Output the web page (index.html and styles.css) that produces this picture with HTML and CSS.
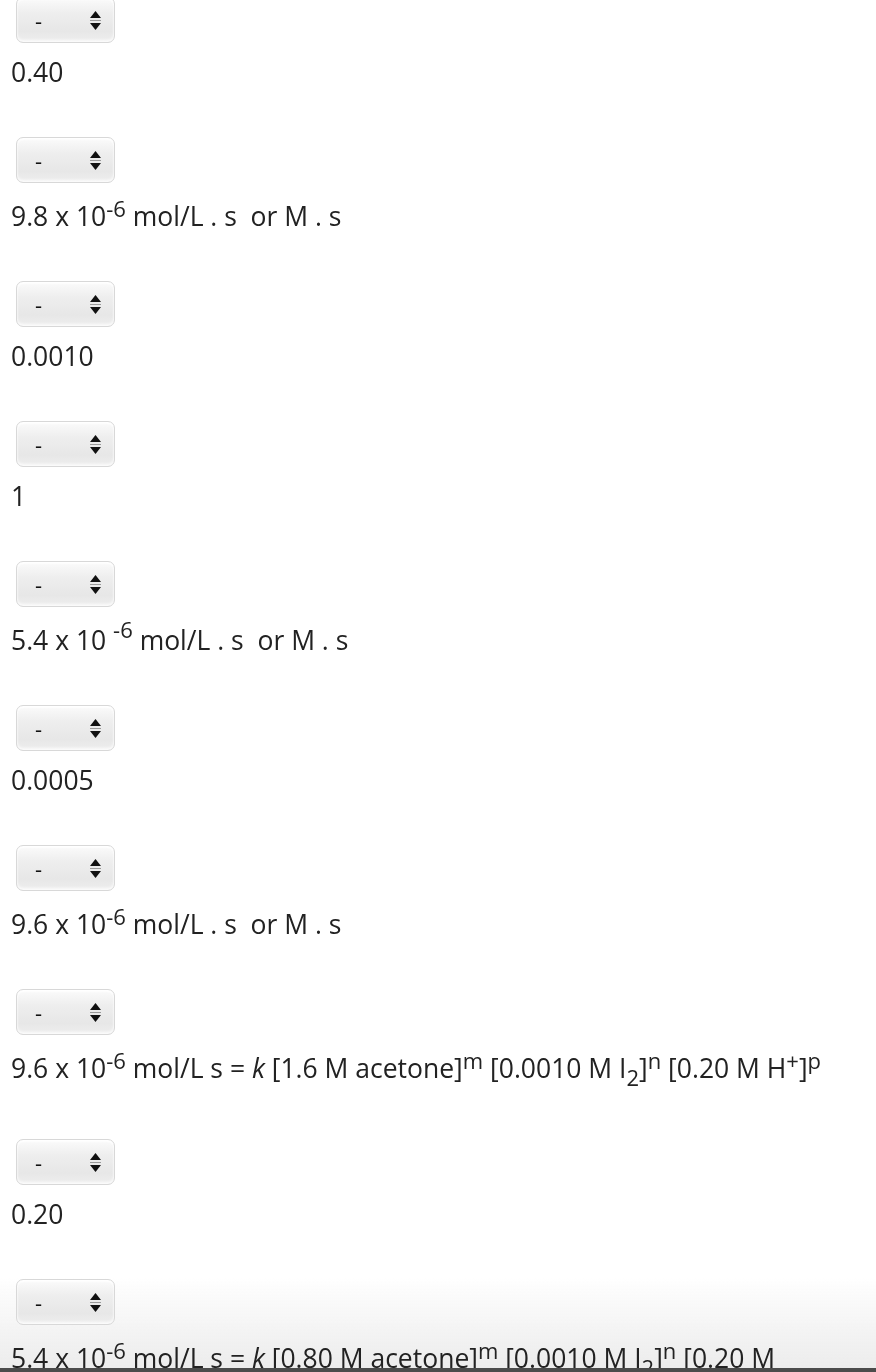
FILE: index.html
```html
<!DOCTYPE html>
<html lang="en">
<head>
<meta charset="utf-8">
<title>Rate law answers</title>
<link rel="stylesheet" href="styles.css">
</head>
<body>
<main class="sheet">
  <div class="q">
    <span class="pick"><select><option>-</option></select><svg class="arrows" viewBox="0 0 11 20" width="11" height="20"><path d="M0 7 L5.5 0 L11 7 Z"/><path class="sep" d="M0 9.5 H11"/><path d="M0 12 L11 12 L5.5 19 Z"/></svg></span>
    <p class="ans">0.40</p>
  </div>
  <div class="q">
    <span class="pick"><select><option>-</option></select><svg class="arrows" viewBox="0 0 11 20" width="11" height="20"><path d="M0 7 L5.5 0 L11 7 Z"/><path class="sep" d="M0 9.5 H11"/><path d="M0 12 L11 12 L5.5 19 Z"/></svg></span>
    <p class="ans">9.8 x 10<sup>-6</sup> mol/L . s&nbsp; or M . s</p>
  </div>
  <div class="q">
    <span class="pick"><select><option>-</option></select><svg class="arrows" viewBox="0 0 11 20" width="11" height="20"><path d="M0 7 L5.5 0 L11 7 Z"/><path class="sep" d="M0 9.5 H11"/><path d="M0 12 L11 12 L5.5 19 Z"/></svg></span>
    <p class="ans">0.0010</p>
  </div>
  <div class="q">
    <span class="pick"><select><option>-</option></select><svg class="arrows" viewBox="0 0 11 20" width="11" height="20"><path d="M0 7 L5.5 0 L11 7 Z"/><path class="sep" d="M0 9.5 H11"/><path d="M0 12 L11 12 L5.5 19 Z"/></svg></span>
    <p class="ans">1</p>
  </div>
  <div class="q">
    <span class="pick"><select><option>-</option></select><svg class="arrows" viewBox="0 0 11 20" width="11" height="20"><path d="M0 7 L5.5 0 L11 7 Z"/><path class="sep" d="M0 9.5 H11"/><path d="M0 12 L11 12 L5.5 19 Z"/></svg></span>
    <p class="ans">5.4 x 10 <sup class="hi">-6</sup> mol/L . s&nbsp; or M . s</p>
  </div>
  <div class="q">
    <span class="pick"><select><option>-</option></select><svg class="arrows" viewBox="0 0 11 20" width="11" height="20"><path d="M0 7 L5.5 0 L11 7 Z"/><path class="sep" d="M0 9.5 H11"/><path d="M0 12 L11 12 L5.5 19 Z"/></svg></span>
    <p class="ans">0.0005</p>
  </div>
  <div class="q">
    <span class="pick"><select><option>-</option></select><svg class="arrows" viewBox="0 0 11 20" width="11" height="20"><path d="M0 7 L5.5 0 L11 7 Z"/><path class="sep" d="M0 9.5 H11"/><path d="M0 12 L11 12 L5.5 19 Z"/></svg></span>
    <p class="ans">9.6 x 10<sup>-6</sup> mol/L . s&nbsp; or M . s</p>
  </div>
  <div class="q">
    <span class="pick"><select><option>-</option></select><svg class="arrows" viewBox="0 0 11 20" width="11" height="20"><path d="M0 7 L5.5 0 L11 7 Z"/><path class="sep" d="M0 9.5 H11"/><path d="M0 12 L11 12 L5.5 19 Z"/></svg></span>
    <p class="ans">9.6 x 10<sup>-6</sup> mol/L s = <i>k</i> [1.6 M acetone]<sup>m</sup> [0.0010 M I<sub>2</sub>]<sup>n</sup> [0.20 M H<sup>+</sup>]<sup>p</sup></p>
  </div>
  <div class="q">
    <span class="pick"><select><option>-</option></select><svg class="arrows" viewBox="0 0 11 20" width="11" height="20"><path d="M0 7 L5.5 0 L11 7 Z"/><path class="sep" d="M0 9.5 H11"/><path d="M0 12 L11 12 L5.5 19 Z"/></svg></span>
    <p class="ans">0.20</p>
  </div>
  <div class="q">
    <span class="pick"><select><option>-</option></select><svg class="arrows" viewBox="0 0 11 20" width="11" height="20"><path d="M0 7 L5.5 0 L11 7 Z"/><path class="sep" d="M0 9.5 H11"/><path d="M0 12 L11 12 L5.5 19 Z"/></svg></span>
    <p class="ans">5.4 x 10<sup>-6</sup> mol/L s = <i>k</i> [0.80 M acetone]<sup>m</sup> [0.0010 M I<sub>2</sub>]<sup>n</sup> [0.20 M H<sup>+</sup>]<sup>p</sup></p>
  </div>
</main>
<div class="fade"></div>
<div class="bar"></div>
</body>
</html>
```

FILE: styles.css
```css
html {
  background: #fff;
}

body {
  margin: 0;
  font-family: "Open Sans", "Noto Sans", sans-serif;
  font-size: 26.5px;
  color: #222;
}

.sheet {
  width: 822px;
  margin-top: -3px;
  padding: 0 0 0 11px;
}

.q {
  margin-bottom: 47px;
}

.pick {
  position: relative;
  display: inline-block;
  margin-left: 5px;
  vertical-align: top;
}

.pick select {
  display: block;
  width: 99px;
  height: 46px;
  margin: 0;
  padding: 0 0 0 18px;
  -webkit-appearance: none;
  appearance: none;
  border: 1px solid #d8d8d8;
  border-radius: 7px;
  background: linear-gradient(to bottom, #fbfbfb 0%, #eeeeee 35%, #e7e7e7 75%, #eeeeee 100%);
  box-shadow: inset 0 2px 2px rgba(255, 255, 255, 0.9), inset 0 -2px 3px rgba(255, 255, 255, 0.8);
  font-family: "Open Sans", sans-serif;
  font-size: 22px;
  color: #111;
}

.pick .arrows {
  position: absolute;
  left: 74px;
  top: 14px;
  pointer-events: none;
  fill: #111;
}

.pick .arrows .sep {
  stroke: #9a9a9a;
  stroke-width: 1;
  fill: none;
}

.ans {
  margin: 11px 0 0;
  line-height: normal;
}

.ans sup {
  font-size: 22px;
  vertical-align: 9px;
  line-height: 1.35;
}

.ans sup.hi {
  vertical-align: 12px;
  line-height: 1;
}

.ans sub {
  font-size: 22px;
  vertical-align: -8px;
  line-height: normal;
}

/* soft grey fade behind the last rows */
.fade {
  position: fixed;
  left: 0;
  right: 0;
  bottom: 0;
  height: 95px;
  z-index: -1;
  background: linear-gradient(to bottom, rgba(234, 234, 234, 0) 0%, #ebebeb 100%);
}

/* dark strip pinned to the bottom edge, over the content */
.bar {
  position: fixed;
  left: 0;
  right: 0;
  bottom: 0;
  height: 4px;
  z-index: 1;
  background: #4b4b4b;
}
```
